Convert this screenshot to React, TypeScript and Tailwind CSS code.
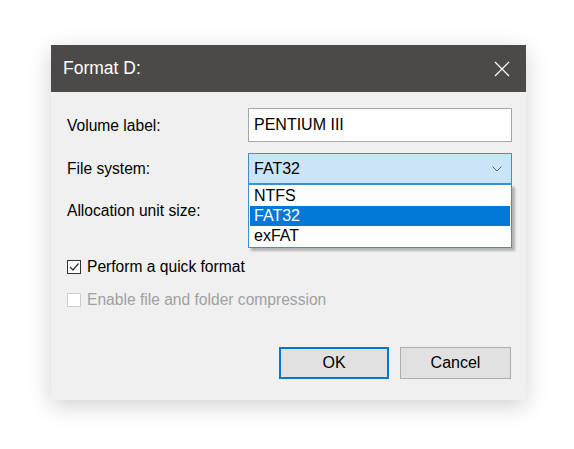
import React from 'react';

const fileSystems = ['NTFS', 'FAT32', 'exFAT'];

const CloseIcon: React.FC = () => (
  <svg width="16" height="16" viewBox="0 0 16 16" fill="none" stroke="white" strokeWidth="1.2">
    <path d="M1 1 L15 15 M15 1 L1 15" />
  </svg>
);

const Chevron: React.FC = () => (
  <svg width="10" height="6" viewBox="0 0 10 6" fill="none" stroke="#606060" strokeWidth="1">
    <path d="M0.5 0.5 L5 5 L9.5 0.5" />
  </svg>
);

const Checkbox: React.FC<{ checked?: boolean; disabled?: boolean }> = ({ checked, disabled }) => (
  <div
    className={
      'w-[14px] h-[14px] border flex items-center justify-center bg-white ' +
      (disabled ? 'border-[#cccccc]' : 'border-[#333333]')
    }
  >
    {checked && (
      <svg width="12" height="12" viewBox="0 0 12 12" fill="none" stroke="#333333" strokeWidth="1.2">
        <path d="M2 6 L5 9 L10.5 2.5" />
      </svg>
    )}
  </div>
);

const App: React.FC = () => {
  const selected = 'FAT32';

  return (
    <div
      className="w-[574px] h-[449px] bg-white pt-[45px] pl-[51px]"
      style={{ fontFamily: '"Liberation Sans", Arial, sans-serif' }}
    >
      <div className="w-[475px] h-[355px] flex flex-col shadow-[0_6px_22px_rgba(0,0,0,0.18)]">
        <div className="h-[47px] bg-[#4b4a48] flex items-center justify-between pl-[12px] pr-[16px]">
          <span className="text-white text-[17.5px]">Format D:</span>
          <CloseIcon />
        </div>

        <div className="flex-1 bg-[#f0f0f0] pl-[16px] pr-[14px] text-[15.6px] text-black relative">
          <div className="mt-[16px] flex items-center h-[34px]">
            <div className="w-[181px] pt-[2px]">Volume label:</div>
            <div className="w-[264px] h-[34px] bg-white border border-[#a6a6a6] flex items-center px-[5px] text-[16px]">
              PENTIUM III
            </div>
          </div>

          <div className="mt-[11px] flex items-center h-[31px]">
            <div className="w-[181px]">File system:</div>
            <div className="relative w-[264px] h-[31px] text-[16px]">
              <div className="w-full h-full bg-[#cce4f7] border border-[#3c8fd4] flex items-center justify-between pl-[5px] pr-[9px]">
                <span>{selected}</span>
                <Chevron />
              </div>
              <div className="absolute left-0 top-[31px] w-[264px] bg-white border border-[#3c8fd4] p-[1px] z-10 shadow-[3px_3px_2px_rgba(0,0,0,0.25)]">
                {fileSystems.map((fs) => (
                  <div
                    key={fs}
                    className={
                      'h-[20px] flex items-center px-[4px] leading-none ' +
                      (fs === selected ? 'bg-[#0078d7] text-white' : '')
                    }
                  >
                    {fs}
                  </div>
                ))}
              </div>
            </div>
          </div>

          <div className="mt-[11px] flex items-center h-[31px]">
            <div className="w-[181px]">Allocation unit size:</div>
            <div className="w-[264px] h-[31px] bg-[#e1e1e1] border border-[#adadad]" />
          </div>

          <div className="mt-[31px] flex items-center h-[20px] gap-[6px]">
            <Checkbox checked />
            <span>Perform a quick format</span>
          </div>

          <div className="mt-[13px] flex items-center h-[20px] gap-[6px] text-[#a0a0a0]">
            <Checkbox disabled />
            <span>Enable file and folder compression</span>
          </div>

          <div className="mt-[37px] flex justify-end gap-[11px] pr-[1px]">
            <button className="w-[110px] h-[32px] bg-[#e1e1e1] border-2 border-[#0078d7] text-[16px]">OK</button>
            <button className="w-[111px] h-[32px] bg-[#e1e1e1] border border-[#adadad] text-[16px]">Cancel</button>
          </div>
        </div>
      </div>
    </div>
  );
};

export default App;
